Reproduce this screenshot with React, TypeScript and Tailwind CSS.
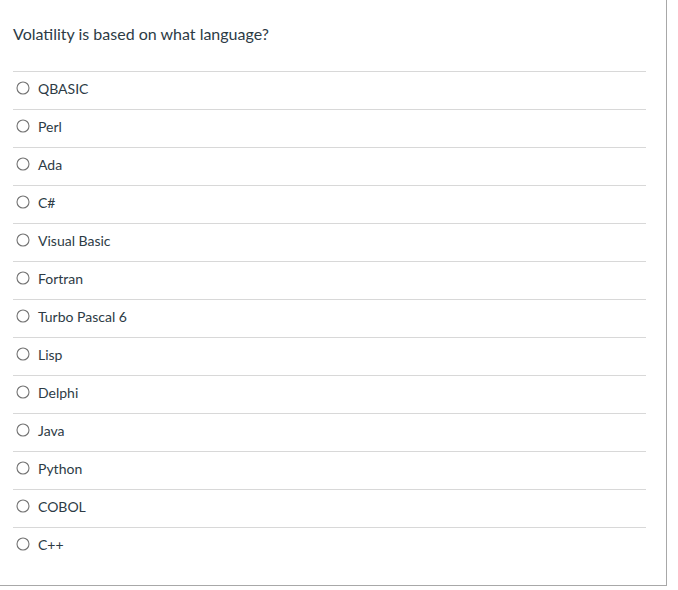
import React from "react";

const options = [
  "QBASIC",
  "Perl",
  "Ada",
  "C#",
  "Visual Basic",
  "Fortran",
  "Turbo Pascal 6",
  "Lisp",
  "Delphi",
  "Java",
  "Python",
  "COBOL",
  "C++",
];

function Radio() {
  return (
    <svg width="14" height="14" viewBox="0 0 14 14" className="shrink-0">
      <circle cx="7" cy="7" r="6" fill="#fff" stroke="#737373" strokeWidth="1.1" />
    </svg>
  );
}

export default function App() {
  return (
    <div className="w-[667px] h-[586px] bg-white border-r border-b border-[#a8a8a8] text-[#2d3b45] font-['Lato','Liberation_Sans',sans-serif]">
      <div className="pl-[13px] pr-[20px]">
        <div className="pt-[22px] h-[71px] text-[16px] leading-[24px]">
          Volatility is based on what language?
        </div>
        <div>
          {options.map((o) => (
            <label
              key={o}
              className="flex items-center gap-[8px] h-[38px] pb-[5px] border-t border-[#d8d8d8] pl-[3px] text-[14px]"
            >
              <Radio />
              <span>{o}</span>
            </label>
          ))}
        </div>
      </div>
    </div>
  );
}
